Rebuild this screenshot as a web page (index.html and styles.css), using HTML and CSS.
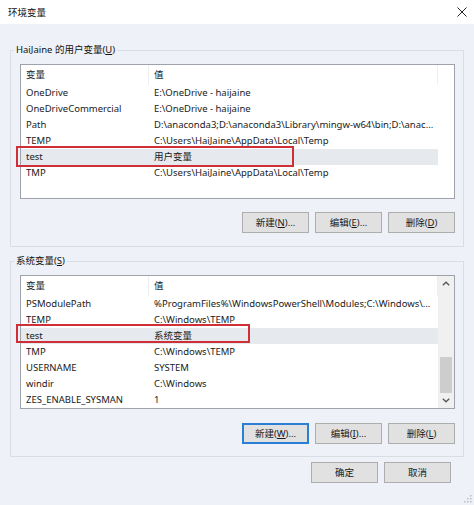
FILE: index.html
```html
<!DOCTYPE html>
<html lang="zh-CN">
<head>
<meta charset="utf-8">
<title>环境变量</title>
<link rel="stylesheet" href="styles.css">
</head>
<body>
<div class="window">
  <div class="titlebar">
    <span class="title">环境变量</span>
    <svg class="close" width="10" height="10" viewBox="0 0 10 10"><path d="M0.5 0.5 L9.5 9.5 M9.5 0.5 L0.5 9.5" stroke="#222" stroke-width="1" fill="none"/></svg>
  </div>
  <div class="main">
    <fieldset class="group group-user">
      <legend>HaiJaine 的用户变量(<u>U</u>)</legend>
      <div class="list list-user">
        <div class="list-body">
          <div class="row head"><span class="c1">变量</span><span class="c2">值</span></div>
          <div class="row"><span class="c1">OneDrive</span><span class="c2">E:\OneDrive - haijaine</span></div>
          <div class="row"><span class="c1">OneDriveCommercial</span><span class="c2">E:\OneDrive - haijaine</span></div>
          <div class="row"><span class="c1">Path</span><span class="c2">D:\anaconda3;D:\anaconda3\Library\mingw-w64\bin;D:\anac...</span></div>
          <div class="row"><span class="c1">TEMP</span><span class="c2">C:\Users\HaiJaine\AppData\Local\Temp</span></div>
          <div class="row sel"><span class="c1">test</span><span class="c2">用户变量</span><span class="mark mark-user"></span></div>
          <div class="row"><span class="c1">TMP</span><span class="c2">C:\Users\HaiJaine\AppData\Local\Temp</span></div>
        </div>
        <div class="noscroll"></div>
      </div>
      <div class="btns">
        <button class="btn">新建(<u>N</u>)...</button>
        <button class="btn">编辑(<u>E</u>)...</button>
        <button class="btn">删除(<u>D</u>)</button>
      </div>
    </fieldset>

    <fieldset class="group group-sys">
      <legend>系统变量(<u>S</u>)</legend>
      <div class="list list-sys">
        <div class="list-body">
          <div class="row head"><span class="c1">变量</span><span class="c2">值</span></div>
          <div class="row"><span class="c1">PSModulePath</span><span class="c2">%ProgramFiles%\WindowsPowerShell\Modules;C:\Windows\...</span></div>
          <div class="row"><span class="c1">TEMP</span><span class="c2">C:\Windows\TEMP</span></div>
          <div class="row sel"><span class="c1">test</span><span class="c2">系统变量</span><span class="mark mark-sys"></span></div>
          <div class="row"><span class="c1">TMP</span><span class="c2">C:\Windows\TEMP</span></div>
          <div class="row"><span class="c1">USERNAME</span><span class="c2">SYSTEM</span></div>
          <div class="row"><span class="c1">windir</span><span class="c2">C:\Windows</span></div>
          <div class="row"><span class="c1">ZES_ENABLE_SYSMAN</span><span class="c2">1</span></div>
        </div>
        <div class="scrollbar">
          <div class="arrow"><svg width="8" height="5" viewBox="0 0 8 5"><path d="M0.8 4.2 L4 1.2 L7.2 4.2" stroke="#555" stroke-width="1.3" fill="none"/></svg></div>
          <div class="track"><div class="thumb"></div></div>
          <div class="arrow"><svg width="8" height="5" viewBox="0 0 8 5"><path d="M0.8 0.8 L4 3.8 L7.2 0.8" stroke="#555" stroke-width="1.3" fill="none"/></svg></div>
        </div>
      </div>
      <div class="btns btns-sys">
        <button class="btn focus">新建(<u>W</u>)...</button>
        <button class="btn">编辑(<u>I</u>)...</button>
        <button class="btn">删除(<u>L</u>)</button>
      </div>
    </fieldset>

    <div class="footer">
      <button class="btn">确定</button>
      <button class="btn">取消</button>
    </div>
  </div>
  <svg class="grip" width="8" height="8" viewBox="0 0 8 8"><g fill="#b8bcc4"><rect x="6" y="0" width="1.5" height="1.5"/><rect x="3" y="3" width="1.5" height="1.5"/><rect x="6" y="3" width="1.5" height="1.5"/><rect x="0" y="6" width="1.5" height="1.5"/><rect x="3" y="6" width="1.5" height="1.5"/><rect x="6" y="6" width="1.5" height="1.5"/></g></svg>
</div>
</body>
</html>
```

FILE: styles.css
```css
* { box-sizing: border-box; }
html, body { margin: 0; padding: 0; }
body {
  font-family: "Noto Sans", "Noto Sans CJK SC", sans-serif;
  font-size: 9.5px;
  color: #1a1a1a;
}
.window {
  position: relative;
  width: 474px;
  height: 505px;
  background: #eef1f7;
  overflow: hidden;
}
.titlebar {
  height: 24px;
  background: #ffffff;
  display: flex;
  align-items: center;
  justify-content: space-between;
  padding: 0 7px 0 8px;
}
.title { color: #111; }
.close { display: block; }
.main { padding: 0 10px; }
.group {
  margin: 18px 0 0 0;
  padding: 6px 8px 13px 9px;
  border: 1px solid #d9dde4;
  width: 454px;
  min-width: 0;
}
.group-sys { margin-top: 6px; padding-bottom: 12px; }
.group legend {
  padding: 0 2px;
  margin-left: -6px;
  line-height: 16px;
  height: 16px;
  color: #111;
}
u { text-decoration: underline; text-underline-offset: 1px; }
.list {
  display: flex;
  background: #ffffff;
  border: 1px solid #9ea3ab;
  height: 135px;
  width: 435px;
}
.list-sys { height: 134px; }
.list-body { flex: 1; min-width: 0; }
.noscroll { width: 16px; }
.row {
  position: relative;
  display: flex;
  height: 16px;
  line-height: 16px;
  white-space: nowrap;
}
.row.head { height: 20px; line-height: 20px; }
.row.head .c1 { border-right: 1px solid #eceef1; }
.row.head .c2 { border-right: 1px solid #eceef1; }
.c1 { width: 128px; padding-left: 5px; flex: none; }
.c2 { flex: 1; padding-left: 5px; overflow: hidden; }
.row.sel { background: #e6e9ee; }
.mark {
  position: absolute;
  border: 2px solid #cf2f37;
  left: -5px;
}
.mark-user { top: -3px; width: 278px; height: 21px; }
.mark-sys { top: -4px; width: 234px; height: 19px; }
.scrollbar {
  width: 16px;
  background: #f0f0f0;
  display: flex;
  flex-direction: column;
}
.arrow {
  height: 17px;
  display: flex;
  align-items: center;
  justify-content: center;
}
.track { flex: 1; padding-top: 65px; }
.thumb { height: 36px; margin: 0 2px; background: #cdcdcd; }
.btns {
  display: flex;
  justify-content: flex-end;
  gap: 6px;
  margin-top: 13px;
}
.btns-sys { margin-top: 14px; }
.btn {
  width: 67px;
  height: 21px;
  padding: 0;
  margin: 0;
  font: inherit;
  color: #1a1a1a;
  background: #e1e1e1;
  border: 1px solid #adadad;
  border-radius: 0;
  line-height: 19px;
}
.btn.focus { border: 2px solid #2a7fd4; line-height: 17px; }
.footer {
  display: flex;
  justify-content: flex-end;
  gap: 6px;
  margin-top: 5px;
  padding-right: 13px;
}
.grip { position: absolute; right: 2px; bottom: 2px; }
```
